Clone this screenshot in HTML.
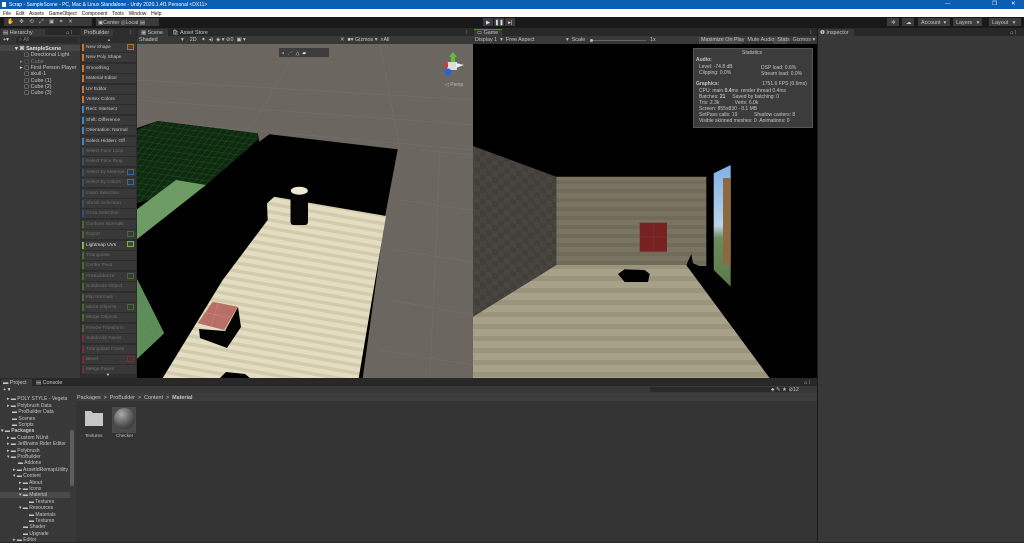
<!DOCTYPE html>
<html><head><meta charset="utf-8"><style>
*{margin:0;padding:0;box-sizing:border-box}
body{width:1024px;height:542px;overflow:hidden;background:#282828;position:relative;font-family:"Liberation Sans",sans-serif}
.a{position:absolute}
.t{position:absolute;font-size:5.4px;line-height:6px;color:#c4c4c4;white-space:nowrap}
.pb{position:absolute;left:82px;width:54px;height:9px;background:#383838;font-size:4.8px;line-height:9px;color:#c4c4c4;padding-left:4px;white-space:nowrap;overflow:hidden}
.pb.d{color:#6f6f6f}
.pb:before{content:"";position:absolute;left:0;top:1px;width:1.5px;height:7px;background:var(--c)}
</style></head><body>
<div class="a" style="left:0;top:0;width:1024px;height:9px;background:#0b5db3"></div>
<div class="t" style="left:9px;top:1.5px;color:#fff;font-size:5px">Scrap - SampleScene - PC, Mac &amp; Linux Standalone - Unity 2020.1.4f1 Personal &lt;DX11&gt;</div>
<div class="a" style="left:2px;top:2px;width:4px;height:5px;background:#fff"></div>
<div class="t" style="left:945px;top:1px;color:#fff">—</div>
<div class="t" style="left:992px;top:1px;color:#fff">❐</div>
<div class="t" style="left:1011px;top:1px;color:#fff">✕</div>
<div class="a" style="left:0;top:9px;width:1024px;height:8px;background:#fff"></div>
<div class="t" style="left:3px;top:10.5px;color:#111;font-size:5px;word-spacing:1px">File&nbsp; Edit&nbsp; Assets&nbsp; GameObject&nbsp; Component&nbsp; Tools&nbsp; Window&nbsp; Help</div>
<div class="a" style="left:0;top:17px;width:1024px;height:11px;background:#191919"></div>
<div class="a" style="left:4px;top:18px;width:88px;height:8px;background:#3a3a3a"></div>
<div class="t" style="left:7px;top:19px;color:#bbb;word-spacing:4px">✋ ✥ ⟲ ⤢ ▣ ⌗ ✕</div>
<div class="a" style="left:96px;top:18px;width:63px;height:8px;background:#3a3a3a"></div>
<div class="t" style="left:98px;top:19.5px">▣Center ◎Local ▤</div>
<div class="a" style="left:483px;top:18px;width:10px;height:8px;background:#3c3c3c"></div>
<div class="a" style="left:494px;top:18px;width:10px;height:8px;background:#3c3c3c"></div>
<div class="a" style="left:505px;top:18px;width:10px;height:8px;background:#3c3c3c"></div>
<div class="t" style="left:486px;top:19.5px;color:#ddd;word-spacing:3px">▶ ❚❚ ▸|</div>
<div class="a" style="left:887px;top:18px;width:12px;height:8px;background:#3c3c3c"></div>
<div class="a" style="left:902px;top:18px;width:12px;height:8px;background:#3c3c3c"></div>
<div class="a" style="left:918px;top:18px;width:32px;height:8px;background:#3c3c3c"></div>
<div class="a" style="left:953px;top:18px;width:29px;height:8px;background:#3c3c3c"></div>
<div class="a" style="left:989px;top:18px;width:32px;height:8px;background:#3c3c3c"></div>
<div class="t" style="left:891px;top:19.5px">✲</div>
<div class="t" style="left:906px;top:19.5px">☁</div>
<div class="t" style="left:921px;top:19.5px">Account&nbsp; ▾</div>
<div class="t" style="left:956px;top:19.5px">Layers&nbsp;&nbsp; ▾</div>
<div class="t" style="left:992px;top:19.5px">Layout&nbsp;&nbsp; ▾</div>

<div class="a" style="left:0;top:28px;width:80px;height:350px;background:#383838"></div>
<div class="a" style="left:0;top:28px;width:80px;height:7px;background:#282828"></div>
<div class="a" style="left:1px;top:29px;width:44px;height:7px;background:#383838"></div>
<div class="t" style="left:3px;top:29.5px">▤ Hierarchy</div>
<div class="t" style="left:66px;top:29.5px">⌂ ⁝</div>
<div class="a" style="left:0;top:36px;width:80px;height:8px;background:#333"></div>
<div class="t" style="left:3px;top:37px;color:#ddd">+▾</div>
<div class="a" style="left:16px;top:37px;width:62px;height:6px;background:#2a2a2a;border-radius:2px"></div>
<div class="t" style="left:19px;top:37px;color:#777">⌕ All</div>
<div class="a" style="left:0;top:45px;width:80px;height:6px;background:#464646"></div>
<div class="t" style="left:15px;top:45.5px;font-weight:bold;color:#ddd">▾ ⌘ SampleScene</div>
<div class="t" style="left:24px;top:52px">▢ Directional Light</div>
<div class="t" style="left:20px;top:58.5px;color:#7a7a7a">▸ ▢ Cube</div>
<div class="t" style="left:20px;top:64.5px">▸ ▢ First Person Player</div>
<div class="t" style="left:24px;top:71px">▢ skull-1</div>
<div class="t" style="left:24px;top:77.5px">▢ Cube (1)</div>
<div class="t" style="left:24px;top:83.5px">▢ Cube (2)</div>
<div class="t" style="left:24px;top:90px">▢ Cube (3)</div>

<div class="a" style="left:80px;top:28px;width:57px;height:350px;background:#2d2d2d"></div>
<div class="a" style="left:81px;top:29px;width:32px;height:7px;background:#383838"></div>
<div class="t" style="left:84px;top:29.5px">ProBuilder</div>
<div class="t" style="left:130px;top:29.5px">⁝</div>
<div class="t" style="left:107px;top:37px;color:#aaa;font-size:4px">▲</div>
<div class="pb" style="top:43px;--c:#c8762f">New Shape</div>
<div class="pb" style="top:53.4px;--c:#c8762f">New Poly Shape</div>
<div class="pb" style="top:63.8px;--c:#c8762f">Smoothing</div>
<div class="pb" style="top:74.2px;--c:#c8762f">Material Editor</div>
<div class="pb" style="top:84.6px;--c:#c8762f">UV Editor</div>
<div class="pb" style="top:95px;--c:#c8762f">Vertex Colors</div>
<div class="pb" style="top:105.4px;--c:#3a86c0">Rect: Intersect</div>
<div class="pb" style="top:115.8px;--c:#3a86c0">Shift: Difference</div>
<div class="pb" style="top:126.2px;--c:#3a86c0">Orientation: Normal</div>
<div class="pb" style="top:136.6px;--c:#3a86c0">Select Hidden: Off</div>
<div class="pb d" style="top:147px;--c:#2c5572">Select Face Loop</div>
<div class="pb d" style="top:157.4px;--c:#2c5572">Select Face Ring</div>
<div class="pb d" style="top:167.8px;--c:#2c5572">Select by Material</div>
<div class="pb d" style="top:178.2px;--c:#2c5572">Select by Colors</div>
<div class="pb d" style="top:188.6px;--c:#2c5572">Invert Selection</div>
<div class="pb d" style="top:199px;--c:#2c5572">Shrink Selection</div>
<div class="pb d" style="top:209.4px;--c:#2c5572">Grow Selection</div>
<div class="pb d" style="top:219.8px;--c:#4a6a2c">Conform Normals</div>
<div class="pb d" style="top:230.2px;--c:#4a6a2c">Export</div>
<div class="pb" style="top:240.6px;--c:#7cb43c;color:#ddd">Lightmap UVs</div>
<div class="pb d" style="top:251px;--c:#4a6a2c">Triangulate</div>
<div class="pb d" style="top:261.4px;--c:#4a6a2c">Center Pivot</div>
<div class="pb d" style="top:271.8px;--c:#4a6a2c">ProBuilderize</div>
<div class="pb d" style="top:282.2px;--c:#4a6a2c">Subdivide Object</div>
<div class="pb d" style="top:292.6px;--c:#4a6a2c">Flip Normals</div>
<div class="pb d" style="top:303px;--c:#4a6a2c">Mirror Objects</div>
<div class="pb d" style="top:313.4px;--c:#4a6a2c">Merge Objects</div>
<div class="pb d" style="top:323.8px;--c:#4a6a2c">Freeze Transform</div>
<div class="pb d" style="top:334.2px;--c:#7a2d30">Subdivide Faces</div>
<div class="pb d" style="top:344.6px;--c:#7a2d30">Triangulate Faces</div>
<div class="pb d" style="top:355px;--c:#7a2d30">Bevel</div>
<div class="pb d" style="top:365.4px;--c:#7a2d30">Merge Faces</div>
<div class="a" style="left:127px;top:44px;width:7px;height:6px;border:0.7px solid #b07030;background:#444"></div>
<div class="a" style="left:127px;top:169px;width:7px;height:6px;border:0.7px solid #3a6a90"></div>
<div class="a" style="left:127px;top:179px;width:7px;height:6px;border:0.7px solid #3a6a90"></div>
<div class="a" style="left:127px;top:231px;width:7px;height:6px;border:0.7px solid #4a6a2c"></div>
<div class="a" style="left:127px;top:241px;width:7px;height:6px;border:0.7px solid #7cb43c;background:#444"></div>
<div class="a" style="left:127px;top:273px;width:7px;height:6px;border:0.7px solid #4a6a2c"></div>
<div class="a" style="left:127px;top:304px;width:7px;height:6px;border:0.7px solid #4a6a2c"></div>
<div class="a" style="left:127px;top:356px;width:7px;height:6px;border:0.7px solid #7a2d30"></div>
<div class="t" style="left:106px;top:372px;color:#ddd;font-size:4px">▼</div>

<div class="a" style="left:137px;top:28px;width:336px;height:16px;background:#282828"></div>
<div class="a" style="left:138px;top:29px;width:30px;height:7px;background:#383838"></div>
<div class="t" style="left:141px;top:29.5px">▦ Scene</div>
<div class="t" style="left:172px;top:29.5px">🛍 Asset Store</div>
<div class="t" style="left:466px;top:29.5px">⁝</div>
<div class="a" style="left:137px;top:36px;width:336px;height:8px;background:#383838"></div>
<div class="t" style="left:139px;top:37.2px">Shaded</div>
<div class="t" style="left:181px;top:37.2px">▾&nbsp;&nbsp;&nbsp; 2D&nbsp;&nbsp; ✦&nbsp; ◂)&nbsp; ◈ ▾ ⊘0&nbsp; ▣ ▾</div>
<div class="t" style="left:340px;top:37.2px">✕&nbsp; ■▾ Gizmos ▾&nbsp; ⌕All</div>
<svg class="a" style="left:137px;top:44px" width="336" height="334" viewBox="137 44 336 334">
<defs>
<pattern id="st" width="12" height="8" patternUnits="userSpaceOnUse" patternTransform="rotate(10)"><rect width="12" height="8" fill="#e4ddc2"/><rect width="12" height="3.5" fill="#d3cbad"/></pattern>
<pattern id="gg" width="6" height="6" patternUnits="userSpaceOnUse" patternTransform="rotate(8) skewX(-30)"><rect width="6" height="6" fill="#0f2a10"/><path d="M0 0H6M0 0V6" stroke="#2f7a30" stroke-width="0.5"/></pattern>
<pattern id="gl" width="6" height="6" patternUnits="userSpaceOnUse" patternTransform="rotate(-20)"><rect width="6" height="6" fill="#6f9a66"/><path d="M0 0H6M0 0V6" stroke="#58b050" stroke-width="0.5"/></pattern>
<pattern id="gl2" width="6" height="6" patternUnits="userSpaceOnUse" patternTransform="rotate(-20)"><rect width="6" height="6" fill="#5f8a5a"/><path d="M0 0H6M0 0V6" stroke="#4da848" stroke-width="0.5"/></pattern>
</defs>
<rect x="137" y="44" width="336" height="334" fill="#6c6661"/>
<g stroke="#7a746e" stroke-width="0.4" fill="none">
<path d="M137 80 L473 100 M137 100 L473 125 M137 120 L473 150 M300 44 L250 130 M380 44 L400 150 M420 150 L473 155 M400 200 L473 210 M395 250 L473 262 M390 300 L473 315 M380 350 L473 365 M440 150 L430 378"/>
</g>
<polygon points="136,128.3 157.7,121 257.7,133.3 259.3,141.7 269.3,134.3 397.7,149.3 385.3,215 362.7,378 136,378" fill="#000"/>
<polygon points="136,130 157.7,121 257.7,133.3 257.7,140 206,185 136,203.3" fill="url(#gg)"/>
<polygon points="136,210 176,180 206,185 136,240" fill="url(#gl)"/>
<polygon points="136,276.7 164.3,333.3 136,360" fill="url(#gl2)"/>
<polygon points="267,203.3 274.3,196.7 386,216 358.7,378 162.7,378 222.7,280 267.7,220" fill="url(#st)"/>
<rect x="290.5" y="190" width="17.5" height="35" rx="3" fill="#050505"/>
<ellipse cx="299.3" cy="190.7" rx="8.5" ry="4" fill="#efe8d2"/>
<polygon points="199,329 225,331 238,307 241,327 227,348 200,338" fill="#030303"/>
<polygon points="197.7,323.3 212.7,301.7 237.7,306.7 224.3,330" fill="#b87066"/>
<path d="M205 312.5 L231 318 M217.5 304 L211 327" stroke="#d08a80" stroke-width="0.5"/>
<polygon points="220,378 226,372 245,374 250,378" fill="#000"/>
<rect x="451" y="57" width="4" height="7" fill="#5fbf3a"/>
<polygon points="449,57 457,57 453,52" fill="#5fbf3a"/>
<rect x="447" y="62" width="10" height="8" fill="#ddd"/>
<polygon points="443,64 448,62 448,68" fill="#d83a2a"/>
<polygon points="456,63 464,65 456,68" fill="#eee"/>
<circle cx="448" cy="72" r="3.5" fill="#2c5fd8"/>
<text x="445" y="86" font-size="5" fill="#bbb" font-family="Liberation Sans">◁ Persp</text>
<rect x="279" y="48" width="50" height="9" rx="1" fill="#3c3c3c"/>
<text x="282" y="54.5" font-size="5" fill="#ddd" font-family="Liberation Sans">◐&#160;&#160;⋰&#160;&#160;△&#160;&#160;▰</text>
</svg>

<div class="a" style="left:473px;top:28px;width:344px;height:16px;background:#282828"></div>
<div class="a" style="left:474px;top:28.5px;width:28px;height:7.5px;background:#383838;border-top:1px solid #3a79bb"></div>
<div class="t" style="left:477px;top:29.5px">▭ Game</div>
<div class="t" style="left:810px;top:29.5px">⁝</div>
<div class="a" style="left:473px;top:36px;width:344px;height:8px;background:#383838"></div>
<div class="t" style="left:475px;top:37.2px">Display 1&nbsp; ▾&nbsp; Free Aspect</div>
<div class="t" style="left:566px;top:37.2px">▾&nbsp; Scale</div>
<div class="a" style="left:590px;top:39px;width:3px;height:3px;border-radius:50%;background:#bbb"></div>
<div class="a" style="left:593px;top:40px;width:53px;height:1px;background:#666"></div>
<div class="t" style="left:650px;top:37.2px">1x</div>
<div class="a" style="left:699px;top:36.5px;width:42px;height:7px;background:#4a4a4a"></div>
<div class="a" style="left:773px;top:36.5px;width:14px;height:7px;background:#4a4a4a"></div>
<div class="t" style="left:701px;top:37.2px">Maximize On Play&nbsp; Mute Audio&nbsp; Stats&nbsp; Gizmos ▾</div>
<svg class="a" style="left:473px;top:44px" width="344" height="334" viewBox="473 44 344 334">
<defs>
<pattern id="ck" width="12" height="12" patternUnits="userSpaceOnUse" patternTransform="skewY(12)"><rect width="12" height="12" fill="#484540"/><rect width="6" height="6" fill="#423f3a"/><rect x="6" y="6" width="6" height="6" fill="#423f3a"/></pattern>
<pattern id="bw" width="10" height="9" patternUnits="userSpaceOnUse"><rect width="10" height="9" fill="#7a7562"/><rect width="10" height="4" fill="#716c5a"/></pattern>
<pattern id="fl" width="10" height="12" patternUnits="userSpaceOnUse"><rect width="10" height="12" fill="#a7a189"/><rect width="10" height="5" fill="#9a947c"/></pattern>
<linearGradient id="sky" x1="0" y1="0" x2="0" y2="1"><stop offset="0" stop-color="#7fb0e8"/><stop offset="0.5" stop-color="#b8d4e8"/><stop offset="0.6" stop-color="#6f8a5e"/><stop offset="1" stop-color="#5a7a48"/></linearGradient>
</defs>
<rect x="473" y="44" width="344" height="334" fill="#000"/>
<polygon points="473,146 556.3,176.7 556.3,265 473,316.7" fill="url(#ck)"/>
<polygon points="556.3,176.7 706.3,176.7 706.3,266 556.3,266" fill="url(#bw)"/>
<polygon points="473,316.7 556.3,265 686.3,265 769.7,378 473,378" fill="url(#fl)"/>
<polygon points="686.3,265 691.3,254 693,263.3 714.7,272.7 769.7,378" fill="#000"/>
<rect x="639.7" y="222.7" width="27.3" height="29" fill="#762222"/>
<path d="M653.3 222.7V251.7M639.7 237H667" stroke="#942c2c" stroke-width="0.5"/>
<polygon points="618,274 624.7,269.3 644.7,270 649.7,274 648,282 624.7,282" fill="#000"/>
<polygon points="713.7,173.3 730.7,165 730.7,286.7 713.7,270" fill="url(#sky)"/>
<rect x="723" y="178" width="7.7" height="87" fill="#8a6a3e"/>
</svg>
<div class="a" style="left:693px;top:48px;width:120px;height:80px;background:#3c3c3c;border:0.5px solid #555"></div>
<div class="t" style="left:742px;top:50px;font-size:5px">Statistics</div>
<div class="t" style="left:696px;top:57px;font-size:5px;font-weight:bold">Audio:</div>
<div class="t" style="left:699px;top:64px;font-size:5px">Level: -74.8 dB</div>
<div class="t" style="left:761px;top:64.5px;font-size:5px">DSP load: 0.6%</div>
<div class="t" style="left:699px;top:70px;font-size:5px">Clipping: 0.0%</div>
<div class="t" style="left:761px;top:70.5px;font-size:5px">Stream load: 0.0%</div>
<div class="t" style="left:696px;top:81px;font-size:5px;font-weight:bold">Graphics:</div>
<div class="t" style="left:762px;top:81px;font-size:5px">1751.6 FPS (0.6ms)</div>
<div class="t" style="left:699px;top:87.5px;font-size:5px">CPU: main <b>0.4</b>ms&nbsp; render thread 0.4ms</div>
<div class="t" style="left:699px;top:93.5px;font-size:5px">Batches: <b>21</b>&nbsp;&nbsp;&nbsp;&nbsp; Saved by batching: 0</div>
<div class="t" style="left:699px;top:99.5px;font-size:5px">Tris: 2.3k&nbsp;&nbsp;&nbsp;&nbsp;&nbsp;&nbsp;&nbsp;&nbsp;&nbsp;&nbsp; Verts: 6.0k</div>
<div class="t" style="left:699px;top:106px;font-size:5px">Screen: 855x830 - 8.1 MB</div>
<div class="t" style="left:699px;top:112px;font-size:5px">SetPass calls: 19&nbsp;&nbsp;&nbsp;&nbsp;&nbsp;&nbsp;&nbsp;&nbsp;&nbsp;&nbsp;&nbsp; Shadow casters: 8</div>
<div class="t" style="left:699px;top:118px;font-size:5px">Visible skinned meshes: 0&nbsp; Animations: 0</div>

<div class="a" style="left:817px;top:28px;width:207px;height:514px;background:#383838;border-left:1px solid #1a1a1a"></div>
<div class="a" style="left:818px;top:28px;width:206px;height:8px;background:#282828"></div>
<div class="a" style="left:818px;top:29px;width:36px;height:7px;background:#383838"></div>
<div class="t" style="left:820px;top:29.5px">❶ Inspector</div>
<div class="t" style="left:1010px;top:29.5px">⌂ ⁝</div>

<div class="a" style="left:0;top:378px;width:817px;height:164px;background:#333"></div>
<div class="a" style="left:0;top:378px;width:817px;height:8px;background:#282828"></div>
<div class="a" style="left:1px;top:379px;width:31px;height:7px;background:#383838"></div>
<div class="t" style="left:3px;top:379.5px">▬ Project</div>
<div class="t" style="left:36px;top:379.5px">▤ Console</div>
<div class="t" style="left:804px;top:379.5px">⌂ ⁝</div>
<div class="a" style="left:0;top:386px;width:817px;height:7px;background:#383838"></div>
<div class="t" style="left:3px;top:386.5px;color:#ddd">+ ▾</div>
<div class="a" style="left:650px;top:387px;width:140px;height:5px;background:#2a2a2a;border-radius:2px"></div>
<div class="t" style="left:771px;top:386.5px;color:#bbb">♣ ✎ ★ ⊘12</div>
<div class="a" style="left:0;top:393px;width:76px;height:149px;background:#383838"></div>
<div class="a" style="left:70px;top:430px;width:4px;height:56px;background:#5e5e5e;border-radius:2px"></div>
<div class="a" style="left:76px;top:393px;width:741px;height:8px;background:#3c3c3c"></div>
<div class="t" style="left:77px;top:394.5px">Packages&nbsp; &gt;&nbsp; ProBuilder&nbsp; &gt;&nbsp; Content&nbsp; &gt;&nbsp; <b>Material</b></div>
<div class="a" style="left:76px;top:401px;width:741px;height:141px;background:#333"></div>
<svg class="a" style="left:84px;top:408px" width="20" height="20" viewBox="0 0 20 20"><path d="M1 3h6l2 2h10v13H1z" fill="#c6c6c6"/></svg>
<div class="a" style="left:112px;top:407px;width:24px;height:26px;background:#4a4a4a"></div>
<div class="a" style="left:114px;top:408px;width:21px;height:21px;border-radius:50%;background:radial-gradient(circle at 35% 30%,#aaa,#555 55%,#222)"></div>
<div class="t" style="left:85px;top:433px;font-size:4.6px">Textures</div>
<div class="t" style="left:116px;top:433px;font-size:4.6px">Checker</div>
<div class="a" style="left:0;top:492px;width:70px;height:6px;background:#4a4a4a"></div>
<div class="t" style="left:7px;top:396px;font-size:5px">▸ ▬ POLY STYLE - Vegeta</div>
<div class="t" style="left:7px;top:402.5px;font-size:5px">▸ ▬ Polybrush Data</div>
<div class="t" style="left:12px;top:409px;font-size:5px">▬ ProBuilder Data</div>
<div class="t" style="left:12px;top:415.5px;font-size:5px">▬ Scenes</div>
<div class="t" style="left:12px;top:421.5px;font-size:5px">▬ Scripts</div>
<div class="t" style="left:1px;top:428px;font-size:5px;font-weight:bold">▾ ▬ Packages</div>
<div class="t" style="left:7px;top:434.5px;font-size:5px">▸ ▬ Custom NUnit</div>
<div class="t" style="left:7px;top:441px;font-size:5px">▸ ▬ JetBrains Rider Editor</div>
<div class="t" style="left:7px;top:447.5px;font-size:5px">▸ ▬ Polybrush</div>
<div class="t" style="left:7px;top:453.5px;font-size:5px">▾ ▬ ProBuilder</div>
<div class="t" style="left:18px;top:460px;font-size:5px">▬ Addons</div>
<div class="t" style="left:13px;top:466.5px;font-size:5px">▸ ▬ AssetIdRemapUtility</div>
<div class="t" style="left:13px;top:473px;font-size:5px">▾ ▬ Content</div>
<div class="t" style="left:19px;top:479.5px;font-size:5px">▸ ▬ About</div>
<div class="t" style="left:19px;top:486px;font-size:5px">▸ ▬ Icons</div>
<div class="t" style="left:19px;top:492px;font-size:5px">▾ ▬ Material</div>
<div class="t" style="left:29px;top:498.5px;font-size:5px">▬ Textures</div>
<div class="t" style="left:19px;top:505px;font-size:5px">▾ ▬ Resources</div>
<div class="t" style="left:29px;top:511.5px;font-size:5px">▬ Materials</div>
<div class="t" style="left:29px;top:518px;font-size:5px">▬ Textures</div>
<div class="t" style="left:23px;top:524px;font-size:5px">▬ Shader</div>
<div class="t" style="left:23px;top:530.5px;font-size:5px">▬ Upgrade</div>
<div class="t" style="left:13px;top:537px;font-size:5px">▸ ▬ Editor</div>
</body></html>
